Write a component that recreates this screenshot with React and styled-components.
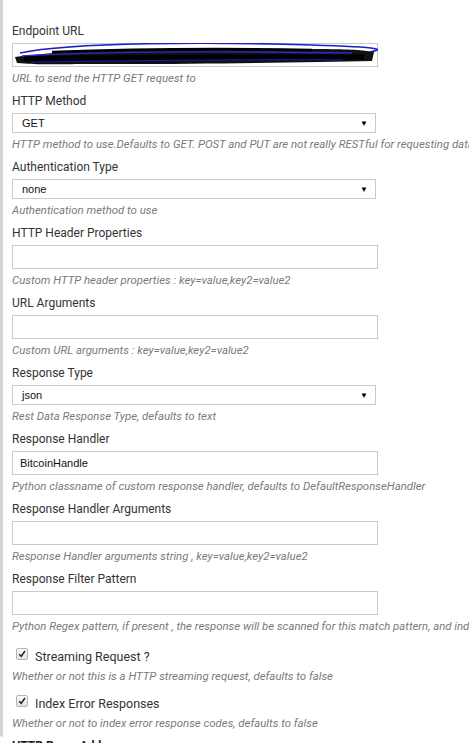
import React from "react";
import styled, { createGlobalStyle } from "styled-components";

const GlobalStyle = createGlobalStyle`
  html, body {
    margin: 0;
    padding: 0;
    background: #fff;
    overflow: hidden;
  }
  body {
    font-family: Roboto, "Liberation Sans", sans-serif;
  }
`;

const fields = [
  { label: "Endpoint URL", type: "input", redacted: true, help: "URL to send the HTTP GET request to" },
  { label: "HTTP Method", type: "select", value: "GET", help: "HTTP method to use.Defaults to GET. POST and PUT are not really RESTful for requesting data from the API endpoint" },
  { label: "Authentication Type", type: "select", value: "none", help: "Authentication method to use" },
  { label: "HTTP Header Properties", type: "input", help: "Custom HTTP header properties : key=value,key2=value2" },
  { label: "URL Arguments", type: "input", help: "Custom URL arguments : key=value,key2=value2" },
  { label: "Response Type", type: "select", value: "json", help: "Rest Data Response Type, defaults to text" },
  { label: "Response Handler", type: "input", value: "BitcoinHandle", help: "Python classname of custom response handler, defaults to DefaultResponseHandler" },
  { label: "Response Handler Arguments", type: "input", help: "Response Handler arguments string , key=value,key2=value2" },
  { label: "Response Filter Pattern", type: "input", help: "Python Regex pattern, if present , the response will be scanned for this match pattern, and indexed if a match is present" },
];

const checks = [
  { label: "Streaming Request ?", help: "Whether or not this is a HTTP streaming request, defaults to false" },
  { label: "Index Error Responses", help: "Whether or not to index error response codes, defaults to false" },
];

// scribble over the url, drawn in the box coords (366 x 24)
const Redaction = () => (
  <Scribble width="366" height="24" viewBox="0 0 366 24">
    <path d="M8 10 C 60 -1, 200 -1, 300 2 S 355 8, 356 10" stroke="#1f1fc8" strokeWidth="1.6" fill="none" />
    <path d="M3 14 C 60 6, 160 6, 250 6 S 340 6, 362 9 L 360 18 C 300 19, 200 21, 110 21 S 30 22, 5 20 Z" fill="#111" />
    <path d="M10 13 C 80 9, 200 8, 340 10" stroke="#2a2ad0" strokeWidth="1.4" fill="none" />
    <path d="M12 16 C 90 14, 220 14, 352 14" stroke="#000" strokeWidth="5" fill="none" />
    <path d="M20 19 C 100 18, 250 16, 330 17" stroke="#1818b0" strokeWidth="1" fill="none" />
    <path d="M40 9 C 120 6, 200 5, 300 7" stroke="#000" strokeWidth="2.5" fill="none" />
  </Scribble>
);

const Check = () => (
  <CheckBox>
    <svg width="10" height="10" viewBox="0 0 10 10">
      <path d="M2.2 5.2 L4.2 7.4 L8 2" stroke="#222" strokeWidth="1.5" fill="none" />
    </svg>
  </CheckBox>
);

const App = () => {
  return (
    <>
      <GlobalStyle />
      <Page>
        <Panel>
          {fields.map((f) => (
            <Field key={f.label}>
              <Label>{f.label}</Label>
              {f.type === "select" ? (
                <Select>
                  <span>{f.value}</span>
                  <Arrow>▼</Arrow>
                </Select>
              ) : (
                <TextBox>
                  {f.value}
                  {f.redacted && <Redaction />}
                </TextBox>
              )}
              <Help>{f.help}</Help>
            </Field>
          ))}
          <Checks>
            {checks.map((c) => (
              <CheckField key={c.label}>
                <CheckRow>
                  <Check />
                  <CheckLabel>{c.label}</CheckLabel>
                </CheckRow>
                <Help>{c.help}</Help>
              </CheckField>
            ))}
          </Checks>
        </Panel>
        <NextLabel>HTTP Proxy Address</NextLabel>
      </Page>
    </>
  );
};

const Page = styled.div`
  width: 469px;
  height: 743px;
  overflow: hidden;
`;

const Panel = styled.div`
  border-left: 3px solid #d4d4d4;
  border-bottom-left-radius: 3px;
  padding: 24px 0 8px 9px;
  height: 737px;
  box-sizing: border-box;
`;

const Field = styled.div`
  margin-bottom: 9px;
`;

const Label = styled.div`
  font-size: 12px;
  line-height: 14px;
  color: #333;
  margin-bottom: 5px;
  white-space: nowrap;
`;

const TextBox = styled.div`
  position: relative;
  width: 366px;
  height: 24px;
  box-sizing: border-box;
  border: 1px solid #cbcbcb;
  padding: 0 7px;
  display: flex;
  align-items: center;
  font-family: "Liberation Sans", Arial, sans-serif;
  font-size: 11px;
  color: #111;
`;

const Scribble = styled.svg`
  position: absolute;
  left: -1px;
  top: -1px;
`;

const Select = styled.div`
  width: 364px;
  height: 20px;
  box-sizing: border-box;
  border: 1px solid #cbcbcb;
  padding: 0 7px 0 9px;
  display: flex;
  align-items: center;
  justify-content: space-between;
  font-family: "Liberation Sans", Arial, sans-serif;
  font-size: 11px;
  color: #111;
`;

const Arrow = styled.span`
  font-size: 8px;
  color: #000;
`;

const Help = styled.div`
  margin-top: 4px;
  font-size: 11.4px;
  line-height: 14px;
  font-style: italic;
  color: #7a7a7a;
  white-space: nowrap;
`;

const Checks = styled.div`
  display: flex;
  flex-direction: column;
  gap: 13px;
  margin-top: 16px;
`;

const CheckField = styled.div``;

const CheckRow = styled.div`
  display: flex;
  align-items: center;
  gap: 7px;
  padding-left: 4px;
  height: 16px;
`;

const CheckBox = styled.span`
  width: 12px;
  height: 12px;
  box-sizing: border-box;
  border: 1px solid #b4b4b4;
  border-radius: 2px;
  background: linear-gradient(#fafafa, #e2e2e2);
  display: flex;
  align-items: center;
  justify-content: center;
  margin-top: -6px;
`;

const CheckLabel = styled.span`
  font-size: 12.5px;
  line-height: 16px;
  color: #333;
`;

const NextLabel = styled.div`
  padding: 2px 0 0 12px;
  font-size: 12px;
  font-weight: bold;
  color: #222;
  line-height: 14px;
`;

export default App;
